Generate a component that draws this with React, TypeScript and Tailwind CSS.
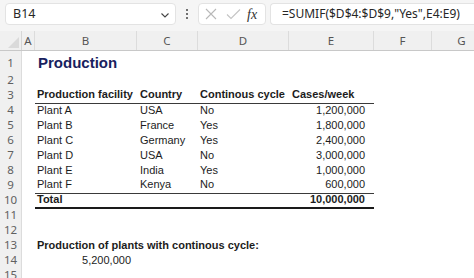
import React from "react";

const gridCols = "grid grid-cols-[22px_13px_102px_61px_91px_85px_58px_60px]";

type Row = { n: number; h: string; b?: React.ReactNode; c?: string; d?: string; e?: string; kind?: string };

const data: Row[] = [
  { n: 1, h: "h-[20px]", kind: "title" },
  { n: 2, h: "h-[15px]" },
  { n: 3, h: "h-[15px]", kind: "head", b: "Production facility", c: "Country", d: "Continous cycle", e: "Cases/week" },
  { n: 4, h: "h-[15px]", b: "Plant A", c: "USA", d: "No", e: "1,200,000" },
  { n: 5, h: "h-[15px]", b: "Plant B", c: "France", d: "Yes", e: "1,800,000" },
  { n: 6, h: "h-[15px]", b: "Plant C", c: "Germany", d: "Yes", e: "2,400,000" },
  { n: 7, h: "h-[15px]", b: "Plant D", c: "USA", d: "No", e: "3,000,000" },
  { n: 8, h: "h-[15px]", b: "Plant E", c: "India", d: "Yes", e: "1,000,000" },
  { n: 9, h: "h-[15px]", kind: "last", b: "Plant F", c: "Kenya", d: "No", e: "600,000" },
  { n: 10, h: "h-[15px]", kind: "total", b: "Total", e: "10,000,000" },
  { n: 11, h: "h-[15px]" },
  { n: 12, h: "h-[15px]" },
  { n: 13, h: "h-[15px]", kind: "label" },
  { n: 14, h: "h-[15px]", kind: "result" },
  { n: 15, h: "h-[15px]" },
];

function SheetRow({ r }: { r: Row }) {
  const bold = r.kind === "head" || r.kind === "total";
  const border =
    r.kind === "head"
      ? "border-b-[1.5px] border-[#3a3a3a]"
      : r.kind === "last"
      ? "border-b border-[#3a3a3a]"
      : r.kind === "total"
      ? "border-b-2 border-[#1a1a1a]"
      : "";
  const txt = `text-[11px] leading-none text-[#1c1c1c] ${bold ? "font-bold" : ""}`;
  return (
    <div className={`${gridCols} ${r.h}`}>
      <div className="flex items-center justify-center bg-[#f0f0f0] border-r border-b border-[#dcdcdc] text-[11.5px] text-[#606060] font-['Noto_Sans',sans-serif]">
        {r.n}
      </div>
      <div />
      {r.kind === "title" ? (
        <div className="col-span-6 flex items-center pl-[3px] pt-[1px] text-[15px] font-bold text-[#18215e] font-['Liberation_Sans',Arial,sans-serif] whitespace-nowrap">
          Production
        </div>
      ) : r.kind === "label" ? (
        <div className={`col-span-6 flex items-center pl-[2px] ${txt} font-bold whitespace-nowrap font-['Liberation_Sans',Arial,sans-serif]`}>
          Production of plants with continous cycle:
        </div>
      ) : r.kind === "result" ? (
        <>
          <div className={`flex items-center justify-end pr-[6px] ${txt} font-['Liberation_Sans',Arial,sans-serif]`}>5,200,000</div>
          <div className="col-span-5" />
        </>
      ) : (
        <>
          <div className={`flex items-center pl-[2px] ${txt} ${border} whitespace-nowrap font-['Liberation_Sans',Arial,sans-serif]`}>{r.b}</div>
          <div className={`flex items-center pl-[3px] ${txt} ${border} whitespace-nowrap font-['Liberation_Sans',Arial,sans-serif]`}>{r.c}</div>
          <div className={`flex items-center pl-[2px] ${txt} ${border} whitespace-nowrap font-['Liberation_Sans',Arial,sans-serif]`}>{r.d}</div>
          <div
            className={`flex items-center ${r.kind === "head" ? "justify-start pl-[3px]" : "justify-end pr-[9px]"} ${txt} ${border} whitespace-nowrap font-['Liberation_Sans',Arial,sans-serif]`}
          >
            {r.e}
          </div>
          <div />
          <div />
        </>
      )}
    </div>
  );
}

export default function App() {
  const letters = ["A", "B", "C", "D", "E", "F", "G"];
  return (
    <div className="w-[474px] h-[278px] overflow-hidden bg-white font-['Noto_Sans',sans-serif]">
      {/* formula bar */}
      <div className="h-[31px] bg-[#f5f5f5] flex items-start pt-[3px] pl-[5px] gap-0">
        <div className="w-[171px] h-[22px] bg-white rounded-[4px] border border-[#e3e3e3] flex items-center justify-between pl-[7px] pr-[5px]">
          <span className="text-[12.5px] text-[#262626]">B14</span>
          <svg width="10" height="10" viewBox="0 0 10 10" className="mt-[1px]">
            <path d="M1.5 3.5 L5 7 L8.5 3.5" stroke="#444" strokeWidth="1.1" fill="none" />
          </svg>
        </div>
        <div className="w-[22px] h-[22px] flex flex-col items-center justify-center gap-[2px]">
          <div className="w-[2px] h-[2px] bg-[#444] rounded-full" />
          <div className="w-[2px] h-[2px] bg-[#444] rounded-full" />
          <div className="w-[2px] h-[2px] bg-[#444] rounded-full" />
        </div>
        <div className="w-[68px] h-[22px] bg-white rounded-[4px] border border-[#e3e3e3] flex items-center pl-[4px]">
          <svg width="16" height="16" viewBox="0 0 16 16">
            <path d="M3 3 L13 13 M13 3 L3 13" stroke="#b8b8b8" strokeWidth="1.1" fill="none" />
          </svg>
          <svg width="18" height="16" viewBox="0 0 18 16" className="ml-[6px]">
            <path d="M2 8.5 L6 12.5 L15 3.5" stroke="#c4c4c4" strokeWidth="1.1" fill="none" />
          </svg>
          <span className="ml-[4px] text-[14px] italic text-[#333] font-['Liberation_Serif',serif]">fx</span>
        </div>
        <div className="ml-[4px] flex-1 h-[22px] bg-white rounded-l-[4px] border border-r-0 border-[#e3e3e3] flex items-center pl-[11px]">
          <span className="text-[12px] text-[#262626] whitespace-nowrap">=SUMIF($D$4:$D$9,"Yes",E4:E9)</span>
        </div>
      </div>
      {/* column headers */}
      <div className={`${gridCols} h-[20px] bg-[#f0f0f0] border-b border-[#c8c8c8]`}>
        <div className="relative border-r border-[#d6d6d6]">
          <div className="absolute right-[2px] bottom-[2px] w-0 h-0 border-l-[11px] border-l-transparent border-b-[11px] border-b-[#dadada]" />
        </div>
        {letters.map((l) => (
          <div key={l} className="flex items-center justify-center border-r border-[#dcdcdc] text-[11.5px] text-[#555]">
            {l}
          </div>
        ))}
      </div>
      {data.map((r) => (
        <SheetRow key={r.n} r={r} />
      ))}
    </div>
  );
}
